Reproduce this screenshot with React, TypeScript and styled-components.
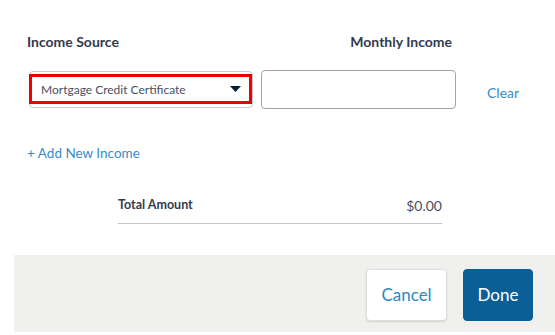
import React from 'react';
import styled, { createGlobalStyle } from 'styled-components';

const GlobalStyle = createGlobalStyle`
  html, body {
    margin: 0;
    padding: 0;
    background: #ffffff;
  }
  body {
    font-family: Lato, 'Liberation Sans', sans-serif;
    color: #333a4d;
  }
`;

const Page = styled.div`
  width: 555px;
  height: 335px;
  display: flex;
  flex-direction: column;
`;

const Form = styled.div`
  padding: 33px 0 0 27px;
  display: flex;
  flex-direction: column;
`;

const HeaderRow = styled.div`
  display: grid;
  grid-template-columns: 234px 195px;
  align-items: center;
  height: 16px;
`;

const HeaderLabel = styled.div<{ $align?: 'left' | 'right' }>`
  font-size: 14px;
  font-weight: 700;
  color: #333a4d;
  text-align: ${({ $align }) => $align || 'left'};
  padding-right: ${({ $align }) => ($align === 'right' ? '4px' : '0')};
`;

const IncomeRow = styled.div`
  display: flex;
  align-items: center;
  margin-top: 21px;
  padding-left: 2px;
`;

const SelectShell = styled.div`
  width: 224px;
  height: 37px;
  box-sizing: border-box;
  border: 1px solid #c9c9c9;
  border-radius: 4px;
  padding: 2px 0 3px;
  display: flex;
`;

const SelectFocus = styled.div`
  flex: 1;
  box-sizing: border-box;
  border: 3px solid #ee0000;
  margin-left: -1px;
  display: flex;
  align-items: center;
  justify-content: space-between;
  padding: 0 8px 0 9px;
  font-size: 12px;
  color: #4a5062;
`;

const Caret = styled.svg`
  width: 11px;
  height: 6px;
  flex: none;
`;

const AmountInput = styled.div`
  width: 195px;
  height: 39px;
  margin-left: 8px;
  box-sizing: border-box;
  border: 1px solid #a3a3a3;
  border-radius: 4px;
  background: #ffffff;
`;

const LinkText = styled.span<{ $size?: number }>`
  font-size: ${({ $size }) => $size || 14}px;
  color: #3a8bc6;
`;

const ClearSlot = styled.div`
  margin-left: 31px;
  padding-top: 4px;
`;

const AddRow = styled.div`
  margin-top: 36px;
  height: 16px;
  display: flex;
  align-items: center;
`;

const TotalBlock = styled.div`
  margin: 34px 0 0 91px;
  width: 324px;
  border-bottom: 1px solid #c6c6c6;
  height: 29px;
  display: flex;
  justify-content: space-between;
  align-items: flex-start;
  padding-top: 2px;
  box-sizing: border-box;
`;

const TotalLabel = styled.span`
  font-size: 12.5px;
  font-weight: 700;
  color: #333a4d;
`;

const TotalValue = styled.span`
  font-size: 14px;
  color: #4a4f5c;
`;

const Footer = styled.div`
  margin: 31px 0 0 14px;
  height: 77px;
  background: #f0f0ef;
  display: flex;
  justify-content: flex-end;
  align-items: center;
  gap: 16px;
  padding-right: 22px;
`;

const Button = styled.button<{ $primary?: boolean }>`
  height: 52px;
  box-sizing: border-box;
  border-radius: 4px;
  font-family: Lato, 'Liberation Sans', sans-serif;
  font-size: 17px;
  cursor: pointer;
  border: 1px solid ${({ $primary }) => ($primary ? '#0b5f97' : '#dedede')};
  background: ${({ $primary }) => ($primary ? '#0b5f97' : '#ffffff')};
  color: ${({ $primary }) => ($primary ? '#ffffff' : '#2f86c4')};
  box-shadow: ${({ $primary }) => ($primary ? 'none' : '0 1px 2px rgba(0,0,0,0.12)')};
  width: ${({ $primary }) => ($primary ? '70px' : '81px')};
  margin-top: 2px;
`;

export default function App() {
  return (
    <>
      <GlobalStyle />
      <Page>
        <Form>
          <HeaderRow>
            <HeaderLabel>Income Source</HeaderLabel>
            <HeaderLabel $align="right">Monthly Income</HeaderLabel>
          </HeaderRow>
          <IncomeRow>
            <SelectShell>
              <SelectFocus>
                <span>Mortgage Credit Certificate</span>
                <Caret viewBox="0 0 11 6">
                  <path d="M0 0 H11 L5.5 6 Z" fill="#0d1a33" />
                </Caret>
              </SelectFocus>
            </SelectShell>
            <AmountInput />
            <ClearSlot>
              <LinkText>Clear</LinkText>
            </ClearSlot>
          </IncomeRow>
          <AddRow>
            <LinkText $size={13.5}>+ Add New Income</LinkText>
          </AddRow>
          <TotalBlock>
            <TotalLabel>Total Amount</TotalLabel>
            <TotalValue>$0.00</TotalValue>
          </TotalBlock>
        </Form>
        <Footer>
          <Button>Cancel</Button>
          <Button $primary>Done</Button>
        </Footer>
      </Page>
    </>
  );
}
